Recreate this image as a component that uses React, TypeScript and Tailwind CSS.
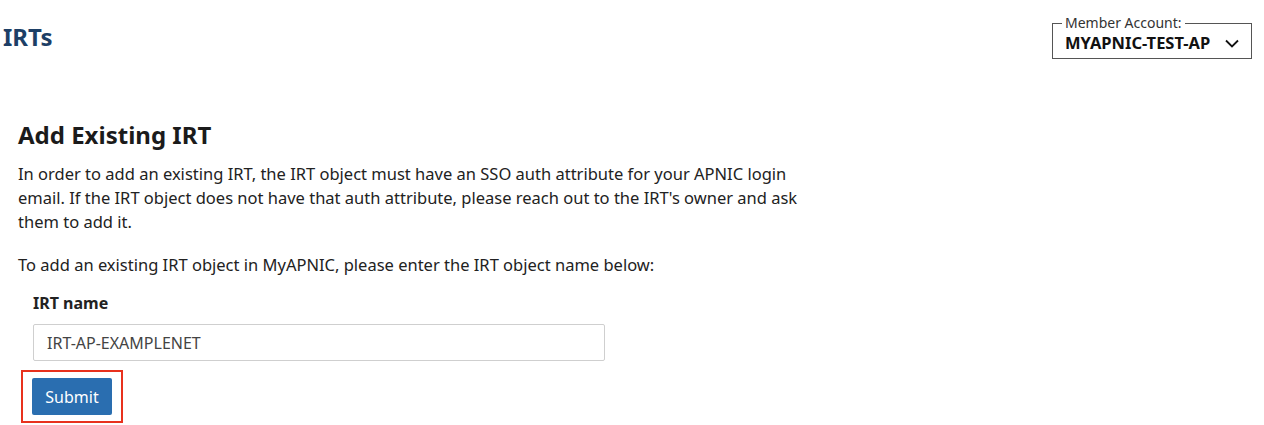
import React, { useState } from "react"

const font = { fontFamily: '"Noto Sans", "Open Sans", sans-serif' }

const MemberSelect: React.FC = () => {
    return (
        <div className="relative w-[200px] h-[36px] border border-[#555] pl-[12px] pr-[12px] flex items-center justify-between">
            {/* legend sits over the top border */}
            <span className="absolute left-[9px] top-[-10px] bg-white px-[3px] text-[14px] leading-[18px] text-[#333]">Member Account:</span>
            <span className="text-[16.5px] font-bold text-[#111] mt-[5px]">MYAPNIC-TEST-AP</span>
            <svg className="mt-[4px]" width="14" height="9" viewBox="0 0 14 9" fill="none" stroke="#111" strokeWidth="1.8">
                <path d="M1 1.5 L7 7.5 L13 1.5" />
            </svg>
        </div>
    )
}

export default function App() {
    const [irtName, setIrtName] = useState<string>("IRT-AP-EXAMPLENET")

    return (
        <div style={font} className="w-[1264px] h-[425px] bg-white text-[#222] overflow-hidden">
            <div className="flex justify-between items-start pt-[23px] pl-[3px] pr-[12px]">
                <h1 className="text-[24px] font-bold text-[#1d3f66] leading-[28px]">IRTs</h1>
                <MemberSelect />
            </div>

            <div className="pl-[18px] pt-[61px]">
                <h2 className="text-[24px] font-bold leading-[30px] text-[#1b1b1b]">Add Existing IRT</h2>
                <p className="mt-[12px] w-[800px] text-[16.5px] leading-[24px]">
                    In order to add an existing IRT, the IRT object must have an SSO auth attribute for your APNIC login email. If the IRT object does not have that auth attribute, please reach out to the IRT's owner and ask them to add it.
                </p>
                <p className="mt-[19px] text-[16.5px] leading-[24px]">
                    To add an existing IRT object in MyAPNIC, please enter the IRT object name below:
                </p>

                <div className="pl-[15px] mt-[14px]">
                    <label className="block text-[16px] font-bold leading-[24px]">IRT name</label>
                    <input
                        value={irtName}
                        onChange={(e) => setIrtName(e.target.value)}
                        className="mt-[9px] w-[572px] h-[37px] border border-[#cfcfcf] rounded-[2px] px-[13px] text-[16px] text-[#444] outline-none"
                    />
                </div>

                <div className="mt-[9px] ml-[3px] w-[102px] h-[53px] border-2 border-[#e8311d] flex items-center justify-center">
                    <button className="w-[80px] h-[37px] bg-[#2a6eb0] rounded-[2px] text-white text-[16px]">
                        Submit
                    </button>
                </div>
            </div>
        </div>
    )
}
